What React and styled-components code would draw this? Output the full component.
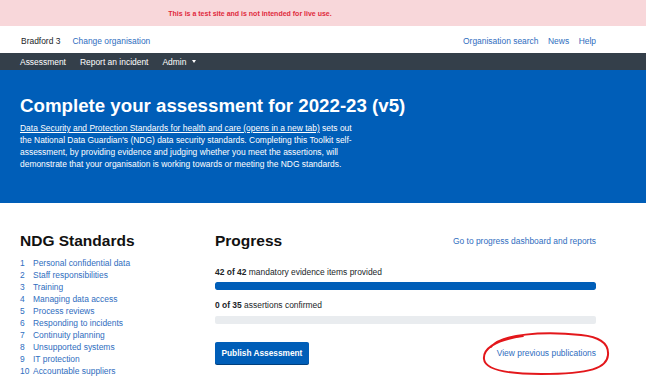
import styled, { createGlobalStyle } from 'styled-components'

const GlobalStyle = createGlobalStyle`
  html, body {
    margin: 0;
    padding: 0;
    background: #ffffff;
  }
  body {
    font-family: 'Liberation Sans', Arial, sans-serif;
    font-size: 8.45px;
    color: #212529;
  }
  * {
    box-sizing: border-box;
  }
`

const standards = [
  'Personal confidential data',
  'Staff responsibilities',
  'Training',
  'Managing data access',
  'Process reviews',
  'Responding to incidents',
  'Continuity planning',
  'Unsupported systems',
  'IT protection',
  'Accountable suppliers',
]

const progress = [
  { done: 42, total: 42, label: 'mandatory evidence items provided' },
  { done: 0, total: 35, label: 'assertions confirmed' },
]

const App = () => {
  return (
    <>
      <GlobalStyle />
      <Banner>This is a test site and is not intended for live use.</Banner>

      <Header>
        <Container>
          <HeaderRow>
            <LinkGroup gap={12}>
              <OrgName>Bradford 3</OrgName>
              <TextLink href="#">Change organisation</TextLink>
            </LinkGroup>
            <LinkGroup gap={9.5}>
              <TextLink href="#">Organisation search</TextLink>
              <TextLink href="#">News</TextLink>
              <TextLink href="#">Help</TextLink>
            </LinkGroup>
          </HeaderRow>
        </Container>
      </Header>

      <Nav>
        <Container>
          <NavList>
            <NavItem>Assessment</NavItem>
            <NavItem>Report an incident</NavItem>
            <NavItem>
              Admin <Caret />
            </NavItem>
          </NavList>
        </Container>
      </Nav>

      <Hero>
        <Container>
          <HeroTitle>Complete your assessment for 2022-23 (v5)</HeroTitle>
          <HeroText>
            <HeroLink href="#">
              Data Security and Protection Standards for health and care (opens in a new tab)
            </HeroLink>{' '}
            <span>sets out</span>{' '}
            <span>
              the National Data Guardian's (NDG) data security standards. Completing this Toolkit
              self-assessment, by providing evidence and judging whether you meet the assertions,
              will demonstrate that your organisation is working towards or meeting the NDG
              standards.
            </span>
          </HeroText>
        </Container>
      </Hero>

      <Container>
        <Main>
          <section>
            <SectionTitle>NDG Standards</SectionTitle>
            <StandardList>
              {standards.map((name, i) => (
                <StandardItem key={name}>
                  <StandardNumber>{i + 1}</StandardNumber>
                  <TextLink href="#">{name}</TextLink>
                </StandardItem>
              ))}
            </StandardList>
          </section>

          <section>
            <SpreadRow>
              <SectionTitle>Progress</SectionTitle>
              <TextLink href="#">Go to progress dashboard and reports</TextLink>
            </SpreadRow>

            <ProgressList>
              {progress.map((item) => (
                <ProgressItem key={item.label}>
                  <ProgressLabel>
                    <strong>
                      {item.done} of {item.total}
                    </strong>{' '}
                    {item.label}
                  </ProgressLabel>
                  <Track>
                    <Fill style={{ width: `${(item.done / item.total) * 100}%` }} />
                  </Track>
                </ProgressItem>
              ))}
            </ProgressList>

            <ActionRow>
              <PrimaryButton>Publish Assessment</PrimaryButton>
              <Circled>
                <TextLink href="#">View previous publications</TextLink>
                <Scribble viewBox="0 0 130 48" width="130" height="48">
                  <path
                    d="M 10 17 C 20 4, 62 1, 100 5 C 120 7, 128 14, 127 25 C 126 38, 110 44, 60 44 C 25 44, 4 40, 3 29 C 2 20, 12 10, 42 6"
                    fill="none"
                    stroke="#e3171b"
                    strokeWidth="2"
                    strokeLinecap="round"
                  />
                </Scribble>
              </Circled>
            </ActionRow>
          </section>
        </Main>
      </Container>
    </>
  )
}

export default App

const Container = styled.div`
  width: 576px;
  margin-left: 20px;
`

const Banner = styled.div`
  height: 26px;
  background: #f8d7da;
  color: #df2a3d;
  font-weight: 700;
  font-size: 7px;
  display: flex;
  align-items: center;
  justify-content: center;
  padding-right: 146px;
`

const Header = styled.header`
  height: 27px;
  background: #ffffff;
`

const HeaderRow = styled.div`
  height: 27px;
  padding-top: 2px;
  display: flex;
  align-items: center;
  justify-content: space-between;
`

const LinkGroup = styled.div`
  display: flex;
  align-items: center;
  gap: ${(p) => p.gap}px;
`

const OrgName = styled.span`
  color: #212529;
  margin-left: 1px;
`

const TextLink = styled.a`
  color: #2f6ec0;
  text-decoration: none;
  line-height: 12px;
`

const Nav = styled.nav`
  height: 17px;
  background: #343f4a;
`

const NavList = styled.div`
  height: 17px;
  display: flex;
  align-items: center;
  gap: 14px;
`

const NavItem = styled.span`
  color: #ffffff;
  display: flex;
  align-items: center;
  gap: 6px;
`

const Caret = styled.span`
  width: 0;
  height: 0;
  border-left: 2.5px solid transparent;
  border-right: 2.5px solid transparent;
  border-top: 3px solid #ffffff;
`

const Hero = styled.div`
  background: #005eb8;
  color: #ffffff;
  padding: 25px 0 33px;
  height: 133px;
`

const HeroTitle = styled.h1`
  margin: 0;
  font-size: 18.7px;
  line-height: 22px;
  font-weight: 700;
`

const HeroText = styled.p`
  margin: 5px 0 0;
  width: 340px;
  line-height: 12px;
`

const HeroLink = styled.a`
  color: #ffffff;
  text-decoration: underline;
`

const Main = styled.main`
  display: grid;
  grid-template-columns: 195px 1fr;
  padding-top: 29px;
`

const SectionTitle = styled.h2`
  margin: 0;
  font-size: 15.5px;
  line-height: 18.6px;
  font-weight: 700;
  color: #111111;
`

const StandardList = styled.ol`
  list-style: none;
  margin: 6px 0 0;
  padding: 0;
`

const StandardItem = styled.li`
  display: flex;
  line-height: 12px;
`

const StandardNumber = styled.span`
  width: 13px;
  color: #2f6ec0;
`

const SpreadRow = styled.div`
  display: flex;
  align-items: center;
  justify-content: space-between;
`

const ProgressList = styled.div`
  margin-top: 15px;
  display: flex;
  flex-direction: column;
  gap: 9px;
`

const ProgressItem = styled.div`
  display: flex;
  flex-direction: column;
  gap: 4.5px;
`

const ProgressLabel = styled.div`
  line-height: 12px;
  color: #212529;

  strong {
    font-weight: 700;
  }
`

const Track = styled.div`
  height: 8px;
  border-radius: 2px;
  background: #e9ecef;
  overflow: hidden;
`

const Fill = styled.div`
  height: 100%;
  background: #005eb8;
  border-radius: 2px;
`

const ActionRow = styled.div`
  margin-top: 18px;
  display: flex;
  align-items: center;
  justify-content: space-between;
`

const PrimaryButton = styled.button`
  height: 22px;
  padding: 0 6.5px;
  border: none;
  border-radius: 2px;
  background: #005eb8;
  color: #ffffff;
  font-family: 'Liberation Sans', Arial, sans-serif;
  font-weight: 700;
  font-size: 8.3px;
  box-shadow: 0 1px 0 #003f7d;
`

const Circled = styled.div`
  position: relative;
  display: flex;
`

const Scribble = styled.svg`
  position: absolute;
  left: -16px;
  top: -17px;
  overflow: visible;
  pointer-events: none;
`
